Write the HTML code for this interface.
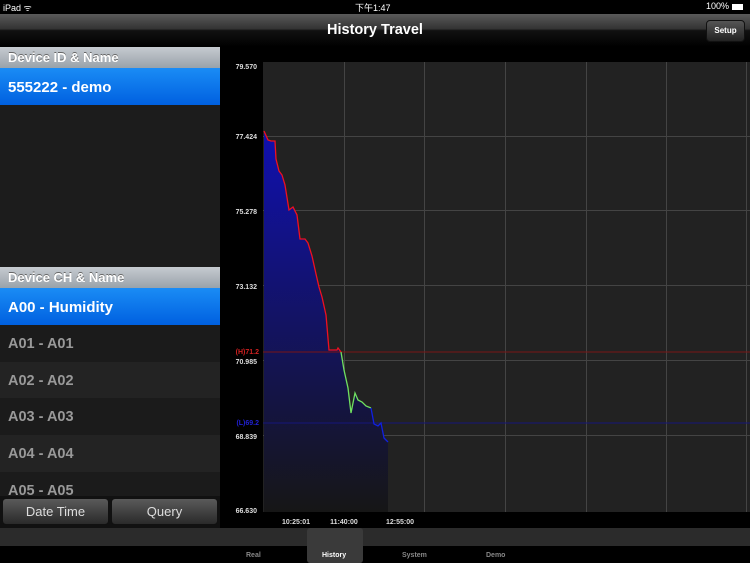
<!DOCTYPE html>
<html><head><meta charset="utf-8"><style>
*{margin:0;padding:0;box-sizing:border-box}
body{width:750px;height:563px;background:#000;overflow:hidden;position:relative;font-family:"Liberation Sans","Noto Sans CJK SC",sans-serif;color:#fff}
.abs{position:absolute}
.hdr{left:0;width:220px;height:21px;background:linear-gradient(#c6cbd0,#99a2aa);color:#fff;font-weight:bold;font-size:13px;padding:3px 0 0 8px;text-shadow:0 -1px 0 #666}
.sel{left:0;width:220px;height:37px;background:linear-gradient(#1a8cf5,#0060e0);font-weight:bold;font-size:15px;padding:11px 0 0 8px}
.row{left:0;width:220px;height:37px;font-weight:bold;font-size:14.5px;color:#999;padding:11px 0 0 8px}
.btn{top:498px;height:27px;width:107px;border-radius:4px;background:linear-gradient(#5a5a5a,#2a2a2a);border:1px solid #111;font-size:13px;color:#ddd;text-align:center;line-height:25px}
.tab{top:552px;font-size:7px;font-weight:bold;color:#888}
</style></head><body>
<div class="abs" style="top:1px;left:3px;font-size:9px">iPad ᯤ</div>
<div class="abs" style="top:1px;left:355px;font-size:9px">下午1:47</div>
<div class="abs" style="top:1px;left:706px;font-size:9px">100% <span style="display:inline-block;width:11px;height:6px;background:#fff;vertical-align:middle"></span></div>
<div class="abs" style="top:14px;left:0;width:750px;height:33px;background:linear-gradient(#5a5a5a 0,#333 45%,#111 50%,#000 100%)"></div>
<div class="abs" style="top:22px;left:0;width:750px;text-align:center;font-size:14.5px;font-weight:bold">History Travel</div>
<div class="abs" style="top:20px;left:706px;width:39px;height:22px;border-radius:4px;background:linear-gradient(#555,#222);border:1px solid #111;font-size:8px;font-weight:bold;text-align:center;line-height:20px">Setup</div>

<div class="abs hdr" style="top:47px">Device ID &amp; Name</div>
<div class="abs sel" style="top:68px">555222 - demo</div>
<div class="abs" style="top:105px;left:0;width:220px;height:162px;background:#1c1c1c"></div>
<div class="abs hdr" style="top:267px">Device CH &amp; Name</div>
<div class="abs sel" style="top:288px">A00 - Humidity</div>
<div class="abs row" style="top:325px;background:#1b1b1b">A01 - A01</div>
<div class="abs row" style="top:362px;background:#232323">A02 - A02</div>
<div class="abs row" style="top:398px;background:#1b1b1b">A03 - A03</div>
<div class="abs row" style="top:435px;background:#232323">A04 - A04</div>
<div class="abs row" style="top:472px;background:#1b1b1b;height:26px;overflow:hidden">A05 - A05</div>
<div class="abs" style="top:496px;left:0;width:220px;height:32px;background:#111"></div>
<div class="abs btn" style="left:2px">Date Time</div>
<div class="abs btn" style="left:111px">Query</div>

<svg class="abs" style="left:220px;top:47px" width="530" height="481" viewBox="220 47 530 481">
<defs><linearGradient id="g" x1="0" y1="0" x2="0" y2="1"><stop offset="0" stop-color="#1010b0"/><stop offset="1" stop-color="#161616"/></linearGradient></defs>
<rect x="263" y="62" width="487" height="450" fill="#222"/>
<g stroke="#444" stroke-width="1">
<line x1="344.5" y1="62" x2="344.5" y2="512"/><line x1="424.5" y1="62" x2="424.5" y2="512"/><line x1="505.5" y1="62" x2="505.5" y2="512"/><line x1="586.5" y1="62" x2="586.5" y2="512"/><line x1="666.5" y1="62" x2="666.5" y2="512"/><line x1="746.5" y1="62" x2="746.5" y2="512"/>
<line x1="263" y1="136.5" x2="750" y2="136.5"/><line x1="263" y1="210.5" x2="750" y2="210.5"/><line x1="263" y1="285.5" x2="750" y2="285.5"/><line x1="263" y1="360.5" x2="750" y2="360.5"/><line x1="263" y1="435.5" x2="750" y2="435.5"/>
</g>
<path d="M264,131 L268,140 271,141 275,141 276,159 279,171 282,175 285,185 289,210 293,207 297,215 300,239 305,239 308,243 312,256 316,274 319,287 322,297 326,315 329,350 337,350 338,348 341,352 344,370 348,388 351,413 355,393 358,400 362,402 366,406 371,408 374,424 378,426 381,423 384,438 388,442 L388,512 L264,512 Z" fill="url(#g)"/>
<line x1="263" y1="352" x2="750" y2="352" stroke="#7a1515"/>
<line x1="263" y1="423" x2="750" y2="423" stroke="#15157a"/>
<polyline fill="none" stroke="#f01020" stroke-width="1.3" points="264,131 268,140 271,141 275,141 276,159 279,171 282,175 285,185 289,210 293,207 297,215 300,239 305,239 308,243 312,256 316,274 319,287 322,297 326,315 329,350 337,350 338,348 341,352"/>
<polyline fill="none" stroke="#70e060" stroke-width="1.3" points="341,352 344,370 348,388 351,413 355,393 358,400 362,402 366,406 371,408"/>
<polyline fill="none" stroke="#1020e0" stroke-width="1.3" points="371,408 374,424 378,426 381,423 384,438 388,442"/>
<g font-size="7" fill="#ddd" font-weight="bold" text-anchor="end">
<text x="257" y="69">79.570</text><text x="257" y="139">77.424</text><text x="257" y="214">75.278</text><text x="257" y="289">73.132</text><text x="257" y="364">70.985</text><text x="257" y="439">68.839</text><text x="257" y="513">66.630</text>
<text x="259" y="354" fill="#d02020">(H)71.2</text><text x="259" y="425" fill="#2020d0">(L)69.2</text>
</g>
<g font-size="7" fill="#ddd" font-weight="bold" text-anchor="middle">
<text x="296" y="524">10:25:01</text><text x="344" y="524">11:40:00</text><text x="400" y="524">12:55:00</text>
</g>
</svg>
<div class="abs" style="top:528px;left:0;width:750px;height:18px;background:#2b2b2b"></div>
<div class="abs" style="top:528px;left:307px;width:56px;height:35px;background:#3a3a3a;border-radius:3px"></div>
<div class="abs tab" style="left:246px">Real</div>
<div class="abs tab" style="left:322px;color:#fff">History</div>
<div class="abs tab" style="left:402px">System</div>
<div class="abs tab" style="left:486px">Demo</div>
</body></html>
